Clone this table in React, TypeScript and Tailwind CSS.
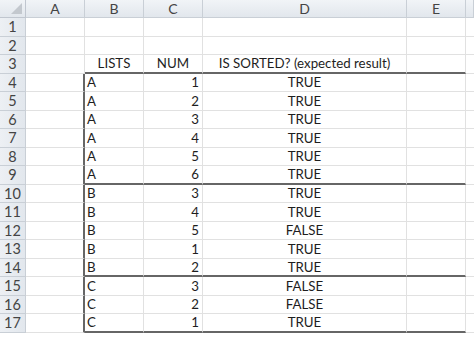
import React from "react";

type Row = [string, string, string];

const rows: Row[] = [
  ["", "", ""],
  ["", "", ""],
  ["LISTS", "NUM", "IS SORTED? (expected result)"],
  ["A", "1", "TRUE"],
  ["A", "2", "TRUE"],
  ["A", "3", "TRUE"],
  ["A", "4", "TRUE"],
  ["A", "5", "TRUE"],
  ["A", "6", "TRUE"],
  ["B", "3", "TRUE"],
  ["B", "4", "TRUE"],
  ["B", "5", "FALSE"],
  ["B", "1", "TRUE"],
  ["B", "2", "TRUE"],
  ["C", "3", "FALSE"],
  ["C", "2", "FALSE"],
  ["C", "1", "TRUE"],
];

// rows whose bottom edge gets the thick line across B..E
const thickBottom = [3, 9, 14, 17];

const cols = "grid grid-cols-[26px_59px_59px_59px_204px_59px_1fr]";

export default function App() {
  return (
    <div className="w-[474px] h-[337px] overflow-hidden bg-white text-[13.3px] text-[#1e1e1e] font-['Lato','Liberation_Sans',sans-serif]">
      {/* column headers */}
      <div className={`${cols} h-[18px] bg-gradient-to-b from-[#f1f4f7] to-[#e1e6ec] text-[#444] text-[14px]`}>
        <div className="relative border-r border-b border-[#c0c6cf]">
          <svg className="absolute right-[3px] bottom-[3px]" width="11" height="11" viewBox="0 0 11 11">
            <polygon points="11,0 11,11 0,11" fill="#c3c8ce" />
          </svg>
        </div>
        {["A", "B", "C", "D", "E", ""].map((c, i) => (
          <div
            key={i}
            className="flex items-center justify-center border-r border-b border-[#c9cfd6] leading-none pt-[1px]"
          >
            {c}
          </div>
        ))}
      </div>

      {rows.map((r, idx) => {
        const n = idx + 1;
        const thick = thickBottom.includes(n);
        const inBox = n >= 4;
        const cellB = thick ? "border-b-2 border-b-[#666]" : "border-b border-b-[#e1e1e1]";
        return (
          <div key={n} className={`${cols} h-[18.5px]`}>
            <div className="flex items-center justify-center bg-gradient-to-r from-[#edf0f4] to-[#e2e7ed] border-r border-b border-[#c9cfd6] text-[#444] text-[14.5px] leading-none pt-[1px]">
              {n}
            </div>
            <div
              className={`border-b border-b-[#e1e1e1] ${
                inBox ? "border-r-2 border-r-[#666]" : "border-r border-r-[#e1e1e1]"
              }`}
            />
            <div
              className={`flex items-center border-r border-r-[#e1e1e1] ${cellB} leading-none pt-[1px] ${
                n === 3 ? "justify-center" : "pl-[2px]"
              }`}
            >
              {r[0]}
            </div>
            <div
              className={`flex items-center border-r border-r-[#e1e1e1] ${cellB} leading-none pt-[1px] ${
                n === 3 ? "justify-center" : "justify-end pr-[3px]"
              }`}
            >
              {r[1]}
            </div>
            <div
              className={`flex items-center justify-center border-r border-r-[#e1e1e1] ${cellB} leading-none pt-[1px] whitespace-nowrap`}
            >
              {r[2]}
            </div>
            <div className={`border-r border-r-[#e1e1e1] ${cellB}`} />
            <div className="border-b border-b-[#e1e1e1]" />
          </div>
        );
      })}
    </div>
  );
}
